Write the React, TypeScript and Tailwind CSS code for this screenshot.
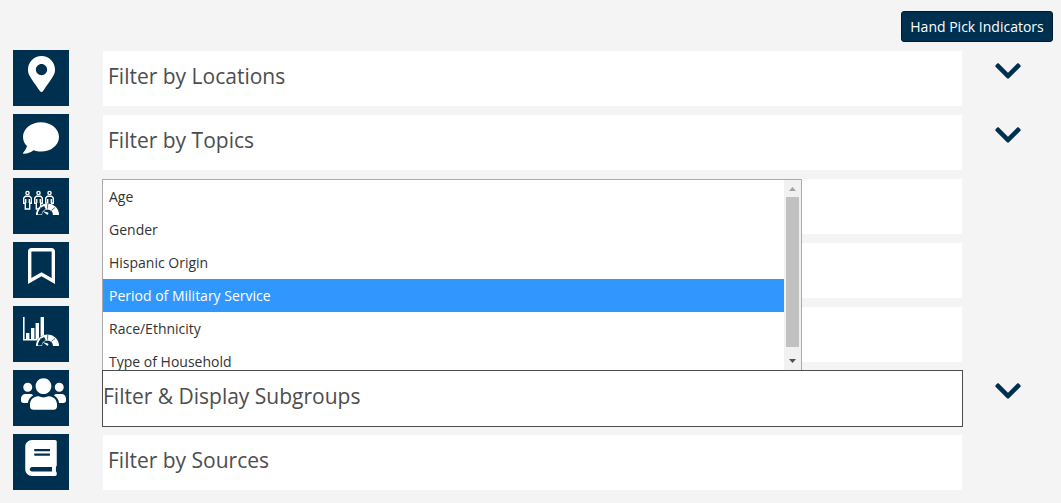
import type { ReactNode } from "react";
import {
  FaBook,
  FaChevronDown,
  FaComment,
  FaMapMarkerAlt,
  FaRegBookmark,
  FaUsers,
} from "react-icons/fa";

function Gauge() {
  return (
    <>
      <path d="M13 34a11.5 11.5 0 0 1 23 0h-6a5.5 5.5 0 0 0-11 0z" fill="#fff" />
      <path d="M14.8 33.5a9.7 9.7 0 0 1 6.4-8.6l1.6 3.3a6.4 6.4 0 0 0-4.2 5.3z" fill="#003050" />
      <path d="M17 26.5l3.4 3M24.8 22.5l-.3 5M32 26.5l-3.6 3" stroke="#003050" strokeWidth="0.7" />
      <path d="M19.5 30l5.3 1.4a1.3 1.3 0 0 1-.6 2.4z" fill="#fff" />
    </>
  );
}

function Person({ x }: { x: number }) {
  return (
    <g transform={`translate(${x} 0)`} fill="none" stroke="#fff" strokeWidth="1.4">
      <circle cx="4.5" cy="9" r="1.6" />
      <path d="M2.4 12.300h4.200L8.300 14v5.200H6.700V25H2.300v-5.800H.7V14zM2.700 15v4M6.300 15v4" />
    </g>
  );
}

function PeopleGaugeIcon() {
  return (
    <svg viewBox="0 0 36 36" className="h-9 w-9" aria-hidden="true">
      <Person x={0} />
      <Person x={11} />
      <Person x={22} />
      <g transform="translate(0 -3)">
        <path d="M13 34.500a12 12 0 0 1 24 0z" fill="#003050" />
        <Gauge />
      </g>
    </svg>
  );
}

function ChartGaugeIcon() {
  return (
    <svg viewBox="0 0 36 36" className="h-9 w-9" aria-hidden="true">
      <path d="M.8 5v22.800H22" fill="none" stroke="#fff" strokeWidth="1.6" />
      <path d="M3 21h3.400v6H3zM8 16h3.400v11H8zM12.600 11H16v16h-3.400zM17.600 5H21v22h-3.400z" fill="#fff" />
      <path d="M12.500 34.500a12 12 0 0 1 24 0z" fill="#003050" />
      <Gauge />
    </svg>
  );
}

type Filter = {
  name: string;
  label?: string;
  icon: ReactNode;
  chevron?: boolean;
  open?: boolean;
};

const filters: Filter[] = [
  { name: "Locations", label: "Filter by Locations", icon: <FaMapMarkerAlt className="h-9 w-[27px]" />, chevron: true },
  { name: "Topics", label: "Filter by Topics", icon: <FaComment className="h-9 w-9" />, chevron: true },
  { name: "Population indicators", icon: <PeopleGaugeIcon /> },
  { name: "Bookmarks", icon: <FaRegBookmark className="h-9 w-[27px]" /> },
  { name: "Data indicators", icon: <ChartGaugeIcon /> },
  {
    name: "Subgroups",
    label: "Filter & Display Subgroups",
    icon: <FaUsers className="h-9 w-[45px] shrink-0" />,
    chevron: true,
    open: true,
  },
  { name: "Sources", label: "Filter by Sources", icon: <FaBook className="h-9 w-8" /> },
];

const subgroups = [
  "Age",
  "Gender",
  "Hispanic Origin",
  "Period of Military Service",
  "Race/Ethnicity",
  "Type of Household",
];

function SubgroupMenu() {
  return (
    <div className="absolute bottom-full left-0 z-10 flex h-[191px] w-[700px] max-w-full overflow-hidden border border-b-0 border-[#aaaaaa] bg-white">
      <select
        size={6}
        aria-label="Subgroups"
        defaultValue="Period of Military Service"
        className="h-[198px] flex-1 overflow-hidden border-0 bg-white p-0 text-sm outline-none"
      >
        {subgroups.map((name) => (
          <option
            key={name}
            className="h-[33px] px-[6px] pt-[7px] pb-0 text-[#333333] checked:bg-linear-to-r checked:from-[#3097ff] checked:to-[#3097ff] checked:[-webkit-text-fill-color:white]"
          >
            {name}
          </option>
        ))}
      </select>
      <div className="flex w-[17px] flex-col items-center justify-between bg-[#f1f1f1]" aria-hidden="true">
        <svg viewBox="0 0 17 17" className="h-[17px] w-[17px]">
          <path d="M5 11h7L8.500 7z" fill="#a3a3a3" />
        </svg>
        <div className="w-[13px] flex-1 bg-[#c1c1c1]" />
        <svg viewBox="0 0 17 23" className="h-[23px] w-[17px]">
          <path d="M5 12h7l-3.500 4z" fill="#505050" />
        </svg>
      </div>
    </div>
  );
}

function FilterRow({ filter }: { filter: Filter }) {
  const { name, label, icon, chevron, open } = filter;
  return (
    <div className="flex items-start">
      <div
        className={`flex h-14 w-14 shrink-0 items-start bg-[#003050] px-2 pt-[6px] text-white ${
          name === "Subgroups" ? "justify-start" : "justify-center"
        }`}
      >
        {icon}
      </div>
      <div className="relative ml-[33px] min-w-0 flex-1">
        {open && <SubgroupMenu />}
        <button
          type="button"
          aria-label={label ? undefined : name}
          aria-expanded={open ? true : false}
          className={`flex h-[57px] w-full items-start border bg-white pt-[10px] text-left text-[21px] leading-[30px] text-[#4d4d4d] ${
            open ? "border-[#4d4d4d]" : "border-[#f4f4f4] pl-[5px]"
          }`}
        >
          {label}
        </button>
      </div>
      <div className="flex w-[90px] shrink-0 justify-center pt-[6px]">
        {chevron && (
          <button type="button" aria-label={`Expand ${name}`} className="text-[#003050]">
            <FaChevronDown className="h-[30px] w-[26px]" />
          </button>
        )}
      </div>
    </div>
  );
}

export default function App() {
  return (
    <main className="min-h-screen bg-[#f4f4f4] pt-[11px] pr-2 pb-3 pl-[13px] font-['Open_Sans',sans-serif]">
      <div className="mb-2 flex justify-end">
        <button
          type="button"
          className="h-[31px] min-w-[152px] rounded-[3px] border border-[#001a2e] bg-[#003050] px-2 text-sm leading-5 text-white"
        >
          Hand Pick Indicators
        </button>
      </div>
      <div className="flex flex-col gap-[7px]">
        {filters.map((filter) => (
          <FilterRow key={filter.name} filter={filter} />
        ))}
      </div>
    </main>
  );
}
